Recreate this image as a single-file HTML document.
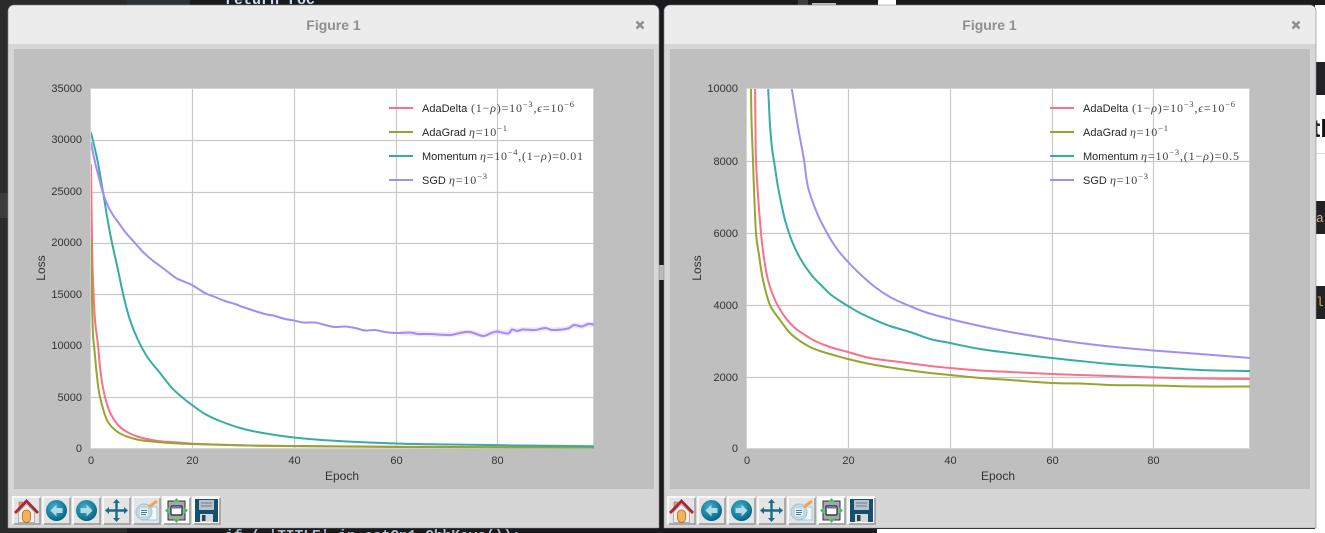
<!DOCTYPE html>
<html><head><meta charset="utf-8"><style>
html,body{margin:0;padding:0;width:1325px;height:533px;overflow:hidden;background:#1c1c1f}
svg{display:block;position:absolute;left:0;top:0}
.t{font:11px "Liberation Sans",sans-serif;fill:#333}
.l{font:11px "Liberation Sans",sans-serif;fill:#262626}
.m{font:12px "Liberation Serif",serif;fill:#444}
.s{font-size:8.5px}
.a{font:12px "Liberation Sans",sans-serif;fill:#333}
.h{font:bold 14px "Liberation Sans",sans-serif;fill:#8f8f8f}
.c{fill:none;stroke-width:2;stroke-linejoin:round;stroke-linecap:round}
.g{stroke:#c9c9c9;stroke-width:1.2;fill:none}
</style></head><body>
<svg id="root" width="1325" height="533" viewBox="0 0 1325 533" xmlns="http://www.w3.org/2000/svg">
<defs>
<clipPath id="cl"><rect x="91" y="89" width="503" height="360"/></clipPath>
<clipPath id="cr"><rect x="747" y="89" width="503" height="360"/></clipPath>
<g id="tb">
  <rect x="0" y="0" width="27" height="27" fill="#e4e4e4"/>
  <path d="M0 27V0H27" fill="none" stroke="#f7f7f7" stroke-width="2"/>
  <path d="M1 27H27V1" fill="none" stroke="#969696" stroke-width="1.4"/>
</g>
<radialGradient id="ball" cx=".4" cy=".35" r=".7"><stop offset="0" stop-color="#43afc8"/><stop offset=".7" stop-color="#117c9a"/><stop offset="1" stop-color="#0a5975"/></radialGradient>
<g id="icons">
  <use href="#tb" x="0"/>
  <path d="M6 5h3.500v8H6z" fill="#e5a26b" stroke="#8b4a3a" stroke-width=".5"/>
  <path d="M5.500 15 13.500 7l8 8v10.500h-16z" fill="#efefe6" stroke="#999" stroke-width=".7"/>
  <rect x="9.500" y="13" width="8" height="12.500" rx="4" fill="#f4b25e" stroke="#a96a1c" stroke-width=".8"/>
  <path d="M2 16 13.500 4 25 16" fill="none" stroke="#a8273a" stroke-width="2.800"/>
  <use href="#tb" x="30"/>
  <circle cx="43.500" cy="13.500" r="10.500" fill="url(#ball)"/>
  <path d="M37.500 13.500l6-6v3.500h6v5h-6v3.500z" fill="#b7d9e3"/>
  <use href="#tb" x="60"/>
  <circle cx="73.500" cy="13.500" r="10.500" fill="url(#ball)"/>
  <path d="M79.500 13.500l-6-6v3.500h-6v5h6v3.500z" fill="#b7d9e3"/>
  <use href="#tb" x="90"/>
  <path d="M103.500 2l3.500 4h-2.300v6.300h6.300V10l4 3.500-4 3.500v-2.300h-6.300V21h2.300l-3.500 4-3.500-4h2.300v-6.300H96V17l-4-3.500L96 10v2.300h6.300V6H100z" fill="#1f6a8b"/>
  <use href="#tb" x="120"/>
  <rect x="129" y="10" width="15" height="13" fill="#f2f8fa" stroke="#8fd0de"/>
  <circle cx="131" cy="15" r="8" fill="#bcd9e4" stroke="#a6c6d4"/>
  <path d="M127 11.500h8v7.500h-8z" fill="#eef4f6"/><path d="M128 13.500h6M128 15.500h6M128 17.500h5" stroke="#4b7a8e" stroke-width=".9"/>
  <path d="M136 10l8-6" stroke="#eda75a" stroke-width="3.200"/>
  <use href="#tb" x="150"/>
  <rect x="151" y="1" width="25" height="25" fill="#fff"/>
  <rect x="155" y="4" width="17" height="19" fill="#9ea9ac" stroke="#333" stroke-width="1"/>
  <rect x="158" y="9" width="11" height="9" rx="1" fill="#fff" stroke="#222" stroke-width="1.200"/>
  <path d="M159 9h9v2.500h-9z" fill="#5f7a96"/>
  <path d="M163.500 1l3 3.500h-6zM163.500 26l3-3.500h-6zM152 13.500l3.500-3v6zM175 13.500l-3.500-3v6z" fill="#38c03f"/>
  <use href="#tb" x="180"/>
  <rect x="181" y="1" width="25" height="25" fill="#fff"/>
  <path d="M182 2h23v23h-23z" fill="#144f70"/>
  <rect x="186" y="3" width="15" height="10" fill="#b9c2c9"/>
  <path d="M188 6h11M188 9h11" stroke="#60809a" stroke-width="1"/>
  <rect x="187" y="17" width="13" height="8" fill="#d3d9dd"/><rect x="189" y="18" width="3.500" height="6" fill="#30414e"/>
</g>
</defs>

<!-- backdrop -->
<rect x="0" y="0" width="1325" height="533" fill="#1b1b1e"/>
<rect x="0" y="0" width="127" height="533" fill="#2b2b2c"/>
<rect x="0" y="193" width="9" height="25" fill="#3c3c3d"/>
<rect x="127" y="0" width="63" height="5" fill="#2d3237"/>
<rect x="798" y="0" width="10" height="5" fill="#3d3d3d"/>
<rect x="812" y="3" width="24" height="2" fill="#bbb"/>
<rect x="878" y="0" width="18" height="5" fill="#fff"/>
<text x="225" y="4" font-family="Liberation Mono,monospace" font-size="15" font-weight="bold" fill="#cfe0f4">return roc</text>
<rect x="877" y="529" width="448" height="4" fill="#fff"/>
<text x="140" y="540" font-family="Liberation Mono,monospace" font-size="14" fill="#9fa6b0">...</text>
<text x="225" y="540" font-family="Liberation Mono,monospace" font-size="14.500" font-weight="bold" fill="#a9b8cc">if ( 'TITLE' in cstCn1.ChhKeys()):</text>
<rect x="1315" y="5" width="10" height="528" fill="#fff"/>
<rect x="1315" y="62" width="10" height="33" fill="#222224"/>
<rect x="1315" y="201" width="10" height="33" fill="#222224"/>
<rect x="1315" y="286" width="10" height="33" fill="#222224"/>
<rect x="1315" y="153" width="10" height="1" fill="#ddd"/>
<text x="1312" y="137" font-family="Liberation Sans,sans-serif" font-size="25" font-weight="bold" fill="#111">tl</text>
<text x="1316" y="222" font-family="Liberation Mono,monospace" font-size="13" fill="#c9b58d">a</text>
<text x="1316" y="306" font-family="Liberation Mono,monospace" font-size="13" fill="#d5b04e">l</text>
<rect x="659" y="265" width="5" height="15" fill="#bbb"/>

<!-- left window -->
<path d="M8 528V11a6 6 0 0 1 6-6H653a6 6 0 0 1 6 6V528z" fill="#d6d6d6" stroke="#8a8a8a" stroke-width=".6"/>
<path d="M8.500 44V11a5.500 5.500 0 0 1 5.500-5.500H653a5.500 5.500 0 0 1 5.500 5.500V44z" fill="#ececec"/>
<text class="h" x="333.500" y="30" text-anchor="middle">Figure 1</text>
<path d="M636.500 21.500l7 7M643.500 21.500l-7 7" stroke="#8f8f8f" stroke-width="2.600"/>
<rect x="14" y="49" width="640" height="440" fill="#bfbfbf"/>
<!-- right window -->
<path d="M664 528V11a6 6 0 0 1 6-6H1310a6 6 0 0 1 6 6V528z" fill="#d6d6d6" stroke="#8a8a8a" stroke-width=".6"/>
<path d="M664.500 44V11a5.500 5.500 0 0 1 5.500-5.500H1310a5.500 5.500 0 0 1 5.500 5.500V44z" fill="#ececec"/>
<text class="h" x="989.500" y="30" text-anchor="middle">Figure 1</text>
<path d="M1292.500 21.500l7 7M1299.500 21.500l-7 7" stroke="#8f8f8f" stroke-width="2.600"/>
<rect x="670" y="49" width="640" height="440" fill="#bfbfbf"/>

<!-- left plot -->
<rect x="90.500" y="88.500" width="503" height="360" fill="#fff" stroke="#d4d4d4"/>
<path class="g" d="M192.500 89V448M294.500 89V448M396.500 89V448M497.500 89V448M91 140.500H594M91 192.500H594M91 243.500H594M91 294.500H594M91 346.500H594M91 397.500H594"/>
<g class="t" text-anchor="end">
<text x="82" y="92">35000</text><text x="82" y="143">30000</text><text x="82" y="195">25000</text><text x="82" y="246">20000</text><text x="82" y="298">15000</text><text x="82" y="349">10000</text><text x="82" y="401">5000</text><text x="82" y="452">0</text>
</g>
<g class="t" text-anchor="middle">
<text x="91" y="464">0</text><text x="192.500" y="464">20</text><text x="294.500" y="464">40</text><text x="396.500" y="464">60</text><text x="497.500" y="464">80</text>
</g>
<text class="a" x="342" y="480" text-anchor="middle">Epoch</text>
<text class="a" x="45" y="268" text-anchor="middle" transform="rotate(-90 45 268)">Loss</text>
<g clip-path="url(#cl)">
<polyline class="c" stroke="#f77189" points="91,165 92,240 93,280 95,320 98,345 100,367 102,382 105,397 109,410 113,418 119,426 127,432 136,436 147,439 158,441 170,442 185,443 200,444 250,445.500 300,446 400,446.800 594,447.300"/>
<polyline class="c" stroke="#97a431" points="91,240 92,300 93,335 94,345 96,367 98,385 100,397 104,412 108,422 115,430 123,435 135,439 147,441 170,443 200,444.300 250,445.500 300,446.300 400,447 594,447.600"/>
<polyline class="c" stroke="#36ada4" points="91,133 94,145 98,163 103,192 110,233 118,270 124,298 130,320 138,340 148,358 160,373 172,388 183,398 192,405 205,414 220,421 240,428 260,432.500 294,437.500 330,440.500 396,443.500 450,444.500 520,445.500 594,446.200"/>
<polyline stroke="#a48cf4" stroke-opacity=".2" stroke-width="5" fill="none" points="400,333 430,334 450,335 460,333 470,332 483,336 490,333.500 497,331.500 508,333.500 512,329.500 517,331 523,329.500 535,330 545,328 553,330 568,328.500 574,325 582,326.500 588,324 594,324.500"/>
<polyline class="c" stroke="#a48cf4" points="91,143 95,162 99,178 103,193 108,206 113,215 118,222 126,233 135,243 143,252 152,260 160,266 168,272 176,278 185,282 192,285 205,293 215,297 225,301 235,304 243,307 255,311 265,314 275,316 285,319 294,320.500 303,322.500 315,322.500 325,325 335,327 345,326.500 355,328 365,330.500 375,330 385,332 396,333 410,332.500 418,334 430,334 450,335 460,333 470,332 483,336 490,333.500 497,331.500 508,333.500 512,329.500 517,331 523,329.500 535,330 545,328 553,330 568,328.500 574,325 582,326.500 588,324 594,324.500"/>
</g>
<g stroke-width="2">
<path d="M389 108h24" stroke="#f77189"/><path d="M389 132h24" stroke="#97a431"/><path d="M389 156h24" stroke="#36ada4"/><path d="M389 180h24" stroke="#a48cf4"/>
</g>
<g class="l">
<text x="422" y="112">AdaDelta</text><text x="422" y="136">AdaGrad</text><text x="422" y="160">Momentum</text><text x="422" y="184">SGD</text>
</g>
<g class="m">
<text x="471" y="112" textLength="103">(1−<tspan font-style="italic">ρ</tspan>)=10<tspan class="s" dy="-5">−3</tspan><tspan dy="5">,</tspan><tspan font-style="italic">ϵ</tspan>=10<tspan class="s" dy="-5">−6</tspan></text>
<text x="469" y="136" textLength="38"><tspan font-style="italic">η</tspan>=10<tspan class="s" dy="-5">−1</tspan></text>
<text x="480" y="160" textLength="103"><tspan font-style="italic">η</tspan>=10<tspan class="s" dy="-5">−4</tspan><tspan dy="5">,</tspan>(1−<tspan font-style="italic">ρ</tspan>)=0.01</text>
<text x="449" y="184" textLength="38"><tspan font-style="italic">η</tspan>=10<tspan class="s" dy="-5">−3</tspan></text>
</g>

<!-- right plot -->
<rect x="746.500" y="88.500" width="503" height="360" fill="#fff" stroke="#d4d4d4"/>
<path class="g" d="M848.500 89V448M950.500 89V448M1052.500 89V448M1153.500 89V448M747 161.500H1250M747 233.500H1250M747 305.500H1250M747 377.500H1250"/>
<g class="t" text-anchor="end">
<text x="738" y="92">10000</text><text x="738" y="165">8000</text><text x="738" y="237">6000</text><text x="738" y="309">4000</text><text x="738" y="381">2000</text><text x="738" y="452">0</text>
</g>
<g class="t" text-anchor="middle">
<text x="747" y="464">0</text><text x="848.500" y="464">20</text><text x="950.500" y="464">40</text><text x="1052.500" y="464">60</text><text x="1153.500" y="464">80</text>
</g>
<text class="a" x="998" y="480" text-anchor="middle">Epoch</text>
<text class="a" x="701" y="268" text-anchor="middle" transform="rotate(-90 701 268)">Loss</text>
<g clip-path="url(#cr)">
<polyline class="c" stroke="#f77189" points="755,85 755.500,130 756,161 758,195 761,233 764,258 768,280 775,300 785,317 795,328 805,335 815,341 830,347 848,352 870,358 900,362 930,366 950,368 980,370.500 1010,372 1052,374 1080,375 1110,376 1153,377.500 1200,378.500 1250,379"/>
<polyline class="c" stroke="#97a431" points="751,85 751.500,120 753,161 754,190 756,233 759,255 763,280 770,305 780,320 790,333 800,341 810,347 820,351 830,354 848,359 870,364 900,369 930,373 950,375 980,378 1010,380 1052,383 1080,383.500 1110,385 1153,385.500 1200,386.500 1250,386.500"/>
<polyline class="c" stroke="#36ada4" points="768,85 770,125 772,148 774,161 778,187 782,207 785,220 789,233 794,246 800,258 807,269 814,278 822,286 830,294 840,301 848,306 860,313 875,320 890,326 910,332 930,339 950,343 980,349 1010,353 1052,358 1080,361 1110,364 1153,367 1200,370 1250,371"/>
<polyline class="c" stroke="#a48cf4" points="791,85 792,90 798,127 804,160 808,187 817,213 827,233 837,249 849,263 860,274 875,287 890,297 905,304 925,312 950,319 980,326 1010,332 1052,339 1080,343 1110,346.500 1153,350.500 1200,354 1250,358"/>
</g>
<g stroke-width="2">
<path d="M1050 108h24" stroke="#f77189"/><path d="M1050 132h24" stroke="#97a431"/><path d="M1050 156h24" stroke="#36ada4"/><path d="M1050 180h24" stroke="#a48cf4"/>
</g>
<g class="l">
<text x="1083" y="112">AdaDelta</text><text x="1083" y="136">AdaGrad</text><text x="1083" y="160">Momentum</text><text x="1083" y="184">SGD</text>
</g>
<g class="m">
<text x="1132" y="112" textLength="103">(1−<tspan font-style="italic">ρ</tspan>)=10<tspan class="s" dy="-5">−3</tspan><tspan dy="5">,</tspan><tspan font-style="italic">ϵ</tspan>=10<tspan class="s" dy="-5">−6</tspan></text>
<text x="1130" y="136" textLength="38"><tspan font-style="italic">η</tspan>=10<tspan class="s" dy="-5">−1</tspan></text>
<text x="1141" y="160" textLength="98"><tspan font-style="italic">η</tspan>=10<tspan class="s" dy="-5">−3</tspan><tspan dy="5">,</tspan>(1−<tspan font-style="italic">ρ</tspan>)=0.5</text>
<text x="1110" y="184" textLength="38"><tspan font-style="italic">η</tspan>=10<tspan class="s" dy="-5">−3</tspan></text>
</g>

<use href="#icons" x="13" y="497"/>
<use href="#icons" x="668" y="497"/>
</svg>
<script>
document.querySelectorAll('polyline.c').forEach(function(el){
  var n=el.getAttribute('points').trim().split(/\s+/).map(function(s){return s.split(',').map(Number)});
  if(n.length>60)return;
  var d='M'+n[0][0]+' '+n[0][1];
  for(var i=0;i<n.length-1;i++){
    var a=n[Math.max(i-1,0)],b=n[i],c=n[i+1],e=n[Math.min(i+2,n.length-1)];
    d+='C'+(b[0]+(c[0]-a[0])/6)+' '+(b[1]+(c[1]-a[1])/6)+' '+(c[0]-(e[0]-b[0])/6)+' '+(c[1]-(e[1]-b[1])/6)+' '+c[0]+' '+c[1];
  }
  var p=document.createElementNS('http://www.w3.org/2000/svg','path');
  p.setAttribute('class','c');p.setAttribute('stroke',el.getAttribute('stroke'));p.setAttribute('d',d);
  el.parentNode.replaceChild(p,el);
});
</script>
</body></html>
